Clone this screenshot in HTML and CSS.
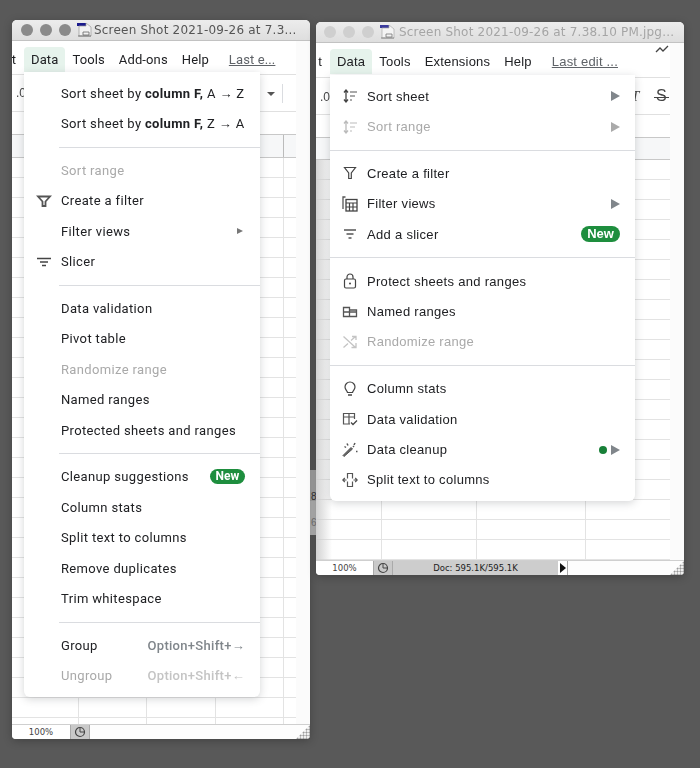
FILE: index.html
```html
<!DOCTYPE html>
<html lang="en">
<head>
<meta charset="utf-8">
<title>Data menus</title>
<link rel="stylesheet" href="styles.css">
</head>
<body>
<div class="behind"><span class="behind-a">8</span><span class="behind-b">6</span></div>

<section class="window win-a">
  <header class="titlebar">
    <i class="light"></i><i class="light"></i><i class="light"></i>
    <svg class="file" width="15" height="14" viewBox="0 0 15 14"><path d="M0 0h9v3H0z" fill="#1a1a8c"/><path d="M9 0l5 4v9H2V3h7z" fill="#f2f2f2" stroke="#9a9a9a" stroke-width=".7"/><path d="M1 13h13" stroke="#777"/><path d="M6 9h6v3H6z" fill="none" stroke="#666" stroke-width=".8"/></svg>
    <span class="title">Screen Shot 2021-09-26 at 7.3...</span>
  </header>
  <div class="content">
    <nav class="menubar">
      <span class="cut">t</span><span class="tab active">Data</span><span class="tab">Tools</span><span class="tab">Add-ons</span><span class="tab">Help</span><u class="last">Last e...</u>
    </nav>
    <div class="toolbar"><span class="dec">.0</span><span class="caret"></span><span class="tooldiv"></span></div>
    <div class="formula"></div>
    <div class="colhead"><span class="colcut"></span></div>
    <div class="grid"></div>
  </div>
  <footer class="status">
    <span class="zoom">100%</span>
    <span class="clock"><svg width="12" height="12" viewBox="0 0 12 12"><circle cx="6" cy="6" r="4.500" fill="none" stroke="#444" stroke-width="1.200"/><path d="M6 2v4h4" fill="none" stroke="#444"/></svg></span>
    <span class="grip"></span>
  </footer>

  <div class="menu">
    <div class="row"><span class="label">Sort sheet by <b>column F,</b> A → Z</span></div>
    <div class="row"><span class="label">Sort sheet by <b>column F,</b> Z → A</span></div>
    <hr class="sep">
    <div class="row off"><span class="label">Sort range</span></div>
    <div class="row"><svg class="ico" width="16" height="12" viewBox="0 0 16 12"><path d="M2 1.500h12L9.500 6.500V11H6.500V6.500z" fill="none" stroke="#555" stroke-width="1.800"/></svg><span class="label">Create a filter</span></div>
    <div class="row"><span class="label">Filter views</span><span class="arrow small"></span></div>
    <div class="row"><svg class="ico" width="16" height="12" viewBox="0 0 16 12"><path d="M1 2.500h14M4 6h8M6 9.500h4" stroke="#444" stroke-width="1.500"/></svg><span class="label">Slicer</span></div>
    <hr class="sep">
    <div class="row"><span class="label">Data validation</span></div>
    <div class="row"><span class="label">Pivot table</span></div>
    <div class="row off"><span class="label">Randomize range</span></div>
    <div class="row"><span class="label">Named ranges</span></div>
    <div class="row"><span class="label">Protected sheets and ranges</span></div>
    <hr class="sep">
    <div class="row"><span class="label">Cleanup suggestions</span><span class="new">New</span></div>
    <div class="row"><span class="label">Column stats</span></div>
    <div class="row"><span class="label">Split text to columns</span></div>
    <div class="row"><span class="label">Remove duplicates</span></div>
    <div class="row"><span class="label">Trim whitespace</span></div>
    <hr class="sep">
    <div class="row"><span class="label">Group</span><span class="keys">Option+Shift+→</span></div>
    <div class="row off"><span class="label">Ungroup</span><span class="keys">Option+Shift+←</span></div>
  </div>
</section>

<section class="window win-b">
  <header class="titlebar">
    <i class="light"></i><i class="light"></i><i class="light"></i>
    <svg class="file" width="15" height="14" viewBox="0 0 15 14"><path d="M0 0h9v3H0z" fill="#3a3a9c"/><path d="M9 0l5 4v9H2V3h7z" fill="#f4f4f4" stroke="#aaa" stroke-width=".7"/><path d="M1 13h13" stroke="#888"/><path d="M6 9h6v3H6z" fill="none" stroke="#777" stroke-width=".8"/></svg>
    <span class="title">Screen Shot 2021-09-26 at 7.38.10 PM.jpg...</span>
  </header>
  <div class="content">
    <nav class="menubar">
      <span class="cut">t</span><span class="tab active">Data</span><span class="tab">Tools</span><span class="tab">Extensions</span><span class="tab">Help</span><u class="last">Last edit ...</u>
      <svg class="spark" width="14" height="8" viewBox="0 0 14 8"><path d="M1 7l4-4 3 3 5-5" fill="none" stroke="#444" stroke-width="1.300"/></svg>
    </nav>
    <div class="toolbar"><span class="dec">.0</span><span class="tool-t">T</span><span class="tool-s">S</span></div>
    <div class="formula"></div>
    <div class="colhead"></div>
    <div class="grid"></div>
  </div>
  <footer class="status">
    <span class="zoom">100%</span>
    <span class="clock"><svg width="12" height="12" viewBox="0 0 12 12"><circle cx="6" cy="6" r="4.500" fill="none" stroke="#444" stroke-width="1.200"/><path d="M6 2v4h4" fill="none" stroke="#444"/></svg></span>
    <span class="doc">Doc: 595.1K/595.1K</span>
    <span class="play"></span>
    <span class="grip"></span>
  </footer>

  <div class="menu">
    <div class="row"><svg class="ico" width="16" height="14" viewBox="0 0 16 14"><path d="M4 2v10M2 3.500L4 1l2 2.500M2 10.500L4 13l2-2.500" fill="none" stroke="#444" stroke-width="1.300"/><path d="M8 3h7M8 7h5M8 11h2" stroke="#555" stroke-width="1.200"/></svg><span class="label">Sort sheet</span><span class="arrow"></span></div>
    <div class="row off"><svg class="ico" width="16" height="14" viewBox="0 0 16 14"><path d="M4 2v10M2 3.500L4 1l2 2.500M2 10.500L4 13l2-2.500" fill="none" stroke="#bbb" stroke-width="1.300"/><path d="M8 3h7M8 7h5M8 11h2" stroke="#bbb" stroke-width="1.200"/></svg><span class="label">Sort range</span><span class="arrow"></span></div>
    <hr class="sep">
    <div class="row"><svg class="ico" width="16" height="14" viewBox="0 0 16 14"><path d="M2.500 1.500h11L9.300 7v5.500H6.700V7z" fill="none" stroke="#444" stroke-width="1.200"/></svg><span class="label">Create a filter</span></div>
    <div class="row"><svg class="ico" width="16" height="16" viewBox="0 0 16 16"><path d="M3.500 1H1v12" fill="none" stroke="#555" stroke-width="1.300"/><rect x="4" y="3.500" width="11" height="11.500" fill="none" stroke="#444" stroke-width="1.300"/><path d="M4 7h11M7.500 7v8M11 7v8M4 11h11" stroke="#444" stroke-width="1.200"/></svg><span class="label">Filter views</span><span class="arrow"></span></div>
    <div class="row"><svg class="ico" width="16" height="12" viewBox="0 0 16 12"><path d="M2 2h12M4.500 6h7M6.500 10h3" stroke="#555" stroke-width="1.300"/></svg><span class="label">Add a slicer</span><span class="new">New</span></div>
    <hr class="sep">
    <div class="row"><svg class="ico" width="16" height="16" viewBox="0 0 16 16"><rect x="2.500" y="6" width="11" height="9" rx="1.500" fill="none" stroke="#444" stroke-width="1.200"/><path d="M5 6V4a3 3 0 016 0v2" fill="none" stroke="#444" stroke-width="1.200"/><circle cx="8" cy="10.500" r="1" fill="#444"/></svg><span class="label">Protect sheets and ranges</span></div>
    <div class="row"><svg class="ico" width="16" height="12" viewBox="0 0 16 12"><path d="M1.500 1.500h6v9h-6zM7.500 4h7v6.500h-7zM1.500 6h13" fill="none" stroke="#555" stroke-width="1.300"/></svg><span class="label">Named ranges</span></div>
    <div class="row off"><svg class="ico" width="16" height="14" viewBox="0 0 16 14"><path d="M1.500 1.500l12 11M9.500 12.500h4.500V8M1.500 12.500L6 8.500M9 5.500l4.500-4M10 1.500h4V5" fill="none" stroke="#c4c4c4" stroke-width="1.300"/></svg><span class="label">Randomize range</span></div>
    <hr class="sep">
    <div class="row"><svg class="ico" width="16" height="16" viewBox="0 0 16 16"><path d="M5.500 11.500C5 9.500 3 8.500 3 6a5 5 0 0110 0c0 2.500-2 3.500-2.500 5.500z" fill="none" stroke="#444" stroke-width="1.200"/><path d="M6 14h4" stroke="#444" stroke-width="1.500"/></svg><span class="label">Column stats</span></div>
    <div class="row"><svg class="ico" width="16" height="14" viewBox="0 0 16 14"><path d="M8 12H1.500V1.500h11V7M1.500 5h11M7 1.500V12" fill="none" stroke="#555" stroke-width="1.200"/><path d="M9 10.500l2 2 4-4" fill="none" stroke="#444" stroke-width="1.300"/></svg><span class="label">Data validation</span></div>
    <div class="row"><svg class="ico" width="16" height="16" viewBox="0 0 16 16"><path d="M2 14.500L1 13.500 9 5.500l1.500 1.500z" fill="#666" stroke="#555" stroke-width="1"/><path d="M5 1.500l1 2M13 1l-1 2M14 9.500h1.500M4 5.500L2.500 4.500M11 4l1 1" stroke="#555" stroke-width="1.500"/></svg><span class="label">Data cleanup</span><span class="dot"></span><span class="arrow"></span></div>
    <div class="row"><svg class="ico" width="16" height="16" viewBox="0 0 16 16"><path d="M5.500 5V1.500h5V5M5.500 11v3.500h5V11M5.500 5v1.500M10.500 5v1.500M5.500 9.500V11M10.500 9.500V11M1 8h3.500M11.500 8H15M2.800 6L.8 8l2 2M13.200 6l2 2-2 2" fill="none" stroke="#555" stroke-width="1.200"/></svg><span class="label">Split text to columns</span></div>
  </div>
</section>
</body>
</html>
```
FILE: styles.css
```css
* { box-sizing: border-box; }
html, body { margin: 0; height: 768px; overflow: hidden; }
body {
  position: relative;
  background: #595959;
  font-family: "Liberation Sans", Arial, sans-serif;
  color: #202124;
}

.behind {
  position: absolute;
  left: 308px; top: 470px;
  width: 10px; height: 65px;
  background: linear-gradient(#a6a6a6 0 48%, #b8b8b8 48% 100%);
  font-size: 10px;
  color: #333;
}
.behind-a { position: absolute; left: 3px; top: 21px; }
.behind-b { position: absolute; left: 3px; top: 47px; color: #777; }

.window {
  position: absolute;
  display: flex;
  flex-direction: column;
  background: #fbfbfb;
  border-radius: 5px 5px 4px 4px;
  overflow: hidden;
  box-shadow: 0 2px 8px rgba(0,0,0,.25);
  filter: blur(.3px);
}
.win-a { left: 12px; top: 20px; width: 298px; height: 719px; }
.win-b { left: 316px; top: 22px; width: 368px; height: 553px; }

.titlebar {
  flex: none;
  height: 21px;
  display: flex;
  align-items: center;
  padding-left: 9px;
  background: linear-gradient(#ececec, #dedede);
  border-bottom: 1px solid #c2c2c2;
  font-family: "DejaVu Sans", sans-serif;
  font-size: 12px;
  letter-spacing: .2px;
  color: #555;
}
.light {
  width: 12px; height: 12px;
  margin-right: 7px;
  border-radius: 50%;
  background: #8a8a8a;
}
.file { flex: none; margin: 0 2px 0 -1px; }
.title { white-space: nowrap; }
.win-b .titlebar { padding-left: 8px; color: #a5a5a5; }
.win-b .light { background: #cfcfcf; }
.win-b .file { margin-right: 4px; }

.content {
  flex: 1;
  min-height: 0;
  display: flex;
  flex-direction: column;
  margin-right: 14px;
  background: #fff;
}

.menubar {
  flex: none;
  height: 34px;
  position: relative;
  display: flex;
  align-items: center;
  border-bottom: 1px solid #e0e0e0;
  font-size: 13px;
  font-family: Roboto, sans-serif;
  letter-spacing: .12px;
  padding-top: 3px;
}
.win-b .menubar {
  height: 35px;
  font-family: "Liberation Sans", sans-serif;
  letter-spacing: .2px;
  padding-top: 2px;
}
.cut { width: 12px; text-align: right; padding-right: 8px; overflow: hidden; direction: rtl; flex: none; }
.win-b .cut { width: 14px; }
.tab { padding: 0 7px; height: 25px; line-height: 25px; border-radius: 4px 4px 0 0; }
.tab.active { background: #e6f3ec; }
.last { margin-left: 13px; color: #5f6368; }
.spark { position: absolute; right: 1px; top: 2px; }

.toolbar {
  flex: none;
  height: 37px;
  position: relative;
  border-bottom: 1px solid #e0e0e0;
  font-size: 12px;
}
.dec { position: absolute; left: 4px; top: 11px; color: #444; }
.win-b .dec { top: 12px; }
.caret {
  position: absolute; left: 255px; top: 17px;
  border: 4px solid transparent; border-top: 4px solid #555; border-bottom: 0;
}
.tooldiv { position: absolute; left: 270px; top: 9px; width: 1px; height: 19px; background: #dadce0; }
.tool-t { position: absolute; left: 315px; top: 10px; font: italic 15px "Liberation Serif", serif; color: #444; }
.tool-s { position: absolute; left: 340px; top: 9px; font-size: 16px; color: #444; }
.tool-s::after { content: ""; position: absolute; left: -2px; right: -2px; top: 10px; height: 1px; background: #444; }

.formula { flex: none; height: 23px; border-bottom: 1px solid #c8c8c8; }
.colhead {
  flex: none;
  height: 23px;
  background: #f6f7f8;
  border-bottom: 1px solid #c8c8c8;
  position: relative;
}
.win-b .colhead { height: 22px; }
.colcut { position: absolute; left: 271px; top: 0; bottom: 0; width: 1px; background: #bbb; }

.grid { flex: 1; background-color: #fff; }
.win-a .grid {
  background-image:
    repeating-linear-gradient(to bottom, transparent 0 19px, #e3e3e3 19px 20px),
    linear-gradient(#e3e3e3, #e3e3e3), linear-gradient(#e3e3e3, #e3e3e3),
    linear-gradient(#e3e3e3, #e3e3e3), linear-gradient(#e3e3e3, #e3e3e3);
  background-size: 100% 100%, 1px 100%, 1px 100%, 1px 100%, 1px 100%;
  background-position: 0 0, 66px 0, 134px 0, 203px 0, 271px 0;
  background-repeat: no-repeat;
}
.win-b .grid {
  background-image:
    linear-gradient(to right, rgba(205,205,205,.9), rgba(255,255,255,0) 16px),
    repeating-linear-gradient(to bottom, transparent 0 19px, #e3e3e3 19px 20px),
    linear-gradient(#e3e3e3, #e3e3e3), linear-gradient(#e3e3e3, #e3e3e3),
    linear-gradient(#e3e3e3, #e3e3e3);
  background-size: 100% 100%, 100% 100%, 1px 100%, 1px 100%, 1px 100%;
  background-position: 0 0, 0 0, 65px 0, 160px 0, 269px 0;
  background-repeat: no-repeat;
}

.status {
  flex: none;
  height: 15px;
  display: flex;
  align-items: stretch;
  position: relative;
  background: #fdfdfd;
  border-top: 1px solid #cfcfcf;
  font-family: "DejaVu Sans", sans-serif;
  font-size: 8.500px;
  color: #444;
}
.zoom { width: 58px; text-align: center; line-height: 14px; background: #fff; }
.win-b .zoom { width: 57px; }
.clock {
  width: 20px;
  display: flex; align-items: center; justify-content: center;
  background: #c9c9c9;
  border-left: 1px solid #aaa;
  border-right: 1px solid #aaa;
}
.doc { width: 165px; text-align: center; line-height: 14px; background: #cdcdcd; color: #222; }
.play { width: 10px; position: relative; background: #fff; border-right: 1px solid #aaa; }
.play::after {
  content: ""; position: absolute; left: 2px; top: 2px;
  border: 5px solid transparent; border-left: 6px solid #111; border-right: 0;
}
.grip {
  position: absolute; right: 0; top: 0; bottom: 0; width: 14px;
  background: #efefef radial-gradient(#9a9a9a 45%, transparent 50%) 0 0 / 3px 3px;
  clip-path: polygon(100% 0, 100% 100%, 0 100%);
}

.menu {
  position: absolute;
  display: flex;
  flex-direction: column;
  background: #fff;
  border-radius: 0 0 6px 6px;
  box-shadow: 0 2px 8px rgba(60,64,67,.22);
  font-size: 13px;
}
.win-a .menu {
  left: 12px; top: 52px; width: 236px;
  padding: 6px 0;
  font-family: Roboto, sans-serif;
  letter-spacing: .35px;
}
.win-b .menu {
  left: 14px; top: 53px; width: 305px;
  padding: 6px 0;
  letter-spacing: .3px;
}
.row {
  flex: none;
  height: 30.400px;
  position: relative;
  display: flex;
  align-items: center;
  padding: 0 15px 0 37px;
}
.label { flex: 1; white-space: nowrap; }
.label b { font-weight: 700; }
.off { color: #a9a9a9; }
.ico { position: absolute; left: 12px; top: 50%; transform: translateY(-50%); }
.sep {
  width: auto;
  margin: 8px 0 7.500px 35px;
  height: 1px;
  border: 0;
  background: #dadce0;
}
.win-b .sep { margin-left: 0; }
.arrow {
  flex: none;
  border: 5px solid transparent;
  border-left: 9px solid #80868b;
  border-right: 0;
}
.arrow.small { border-width: 3px 0 3px 6px; border-left-color: #777; margin-right: 2px; }
.win-b .off .arrow { border-left-color: #aaa; }
.new {
  flex: none;
  width: 35px; height: 15px;
  border-radius: 8px;
  background: #1e8e3e;
  color: #fff;
  font-size: 12px;
  font-weight: 700;
  line-height: 15px;
  text-align: center;
  letter-spacing: 0;
}
.win-b .new { width: 39px; height: 16px; line-height: 16px; font-size: 13px; }
.keys { flex: none; color: #80868b; font-weight: 500; letter-spacing: .3px; }
.off .keys { color: #c4c4c4; }
.dot { flex: none; width: 8px; height: 8px; margin-right: 4px; border-radius: 50%; background: #188038; }
```
